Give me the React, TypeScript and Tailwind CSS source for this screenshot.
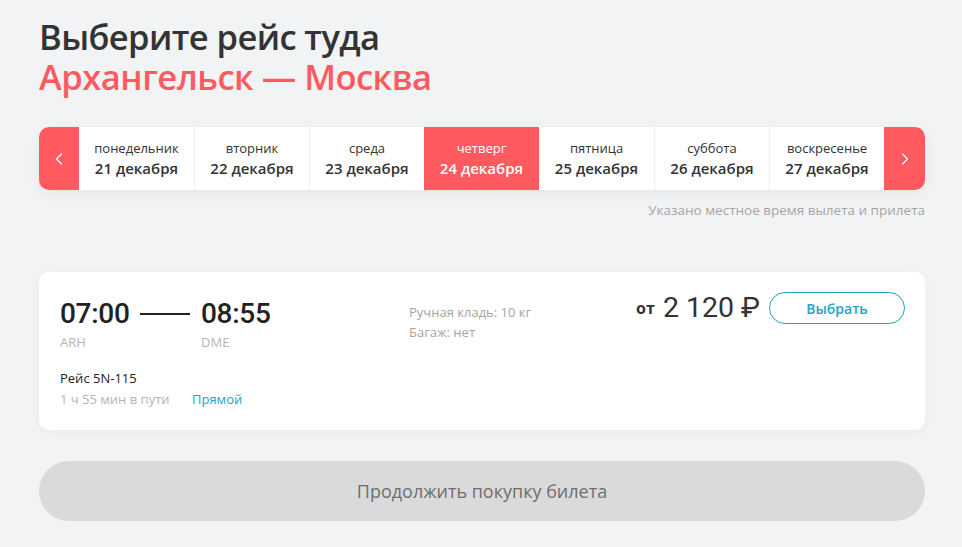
import { ChevronLeft, ChevronRight } from 'lucide-react';

const days = [
  { wd: 'понедельник', date: '21 декабря' },
  { wd: 'вторник', date: '22 декабря' },
  { wd: 'среда', date: '23 декабря' },
  { wd: 'четверг', date: '24 декабря', active: true },
  { wd: 'пятница', date: '25 декабря' },
  { wd: 'суббота', date: '26 декабря' },
  { wd: 'воскресенье', date: '27 декабря' },
];

export default function App() {
  return (
    <div
      className="min-h-[547px] w-[962px] bg-[#f2f3f5] pl-[39px] pr-[37px] pt-[17px] text-[#333]"
      style={{ fontFamily: '"Open Sans", "Noto Sans", sans-serif' }}
    >
      {/* Header */}
      <h1 className="text-[34.5px] font-semibold leading-[40px] tracking-[-0.6px] text-[#333]">
        Выберите рейс туда
      </h1>
      <h2 className="text-[34.5px] font-semibold leading-[40px] tracking-[-0.5px] text-[#ff5a5f]">
        Архангельск — Москва
      </h2>

      {/* Date strip */}
      <div className="mt-[30px] flex h-[63px] overflow-hidden rounded-[10px] bg-white shadow-[0_4px_14px_rgba(0,0,0,0.06)]">
        <button className="flex w-[40px] items-center justify-center bg-[#ff5a5f] text-white">
          <ChevronLeft size={20} strokeWidth={1.5} />
        </button>
        {days.map((d, i) => (
          <div
            key={i}
            className={`flex w-[115px] flex-col items-center justify-center ${
              d.active ? 'bg-[#ff5a5f] text-white' : 'text-[#333]'
            } ${i === 0 || d.active || days[i - 1]?.active ? '' : 'border-l border-[#f0f0f0]'}`}
          >
            <span className="text-[13px] leading-[18px]">{d.wd}</span>
            <span className="text-[15px] font-semibold leading-[22px]">{d.date}</span>
          </div>
        ))}
        <button className="flex flex-1 items-center justify-center bg-[#ff5a5f] text-white">
          <ChevronRight size={20} strokeWidth={1.5} />
        </button>
      </div>
      <div className="mt-[11px] text-right text-[13.5px] leading-[18px] text-[#a5a5a5]">
        Указано местное время вылета и прилета
      </div>

      {/* Flight card */}
      <div className="mt-[53px] flex h-[158px] rounded-[10px] bg-white pl-[21px] pr-[20px] pt-[23px] shadow-[0_2px_10px_rgba(0,0,0,0.04)]">
        <div className="w-[349px]">
          <div className="flex items-start">
            <div className="w-[80px]">
              <div
                className="text-[28px] font-medium leading-[38px] tracking-[-0.3px] text-[#222]"
                style={{ fontFamily: 'Roboto, sans-serif' }}
              >
                07:00
              </div>
              <div className="text-[13px] leading-[18px] text-[#b5b5b5]">ARH</div>
            </div>
            <div className="mr-[11px] mt-[18px] h-[2px] w-[50px] bg-[#222]" />
            <div>
              <div
                className="text-[28px] font-medium leading-[38px] tracking-[-0.3px] text-[#222]"
                style={{ fontFamily: 'Roboto, sans-serif' }}
              >
                08:55
              </div>
              <div className="text-[13px] leading-[18px] text-[#b5b5b5]">DME</div>
            </div>
          </div>
          <div className="mt-[17px] text-[13px] leading-[20px] text-[#222]">Рейс 5N-115</div>
          <div className="mt-[1px] flex text-[13px] leading-[20px]">
            <span className="w-[132px] text-[#b5b5b5]">1 ч 55 мин в пути</span>
            <span className="text-[#1fa4c1]">Прямой</span>
          </div>
        </div>
        <div className="pt-[7px] text-[13px] leading-[20px] text-[#a5a5a5]">
          <div>Ручная кладь: 10 кг</div>
          <div>Багаж: нет</div>
        </div>
        <div className="-mt-[3px] ml-auto flex h-[32px] items-center">
          <span className="mr-[8px] text-[16px] font-bold text-[#333]">от</span>
          <span
            className="text-[28.5px] leading-[32px] text-[#333]"
            style={{ fontFamily: 'Roboto, sans-serif' }}
          >
            2 120 ₽
          </span>
          <button className="ml-[9px] flex h-[32px] w-[136px] items-center justify-center rounded-full border border-[#1fa4c1] text-[14px] font-semibold text-[#1fa4c1]">
            Выбрать
          </button>
        </div>
      </div>

      {/* Continue */}
      <button className="mt-[31px] flex h-[60px] w-full items-center justify-center rounded-full bg-[#dadada] text-[18px] text-[#6e6e6e]">
        Продолжить покупку билета
      </button>
    </div>
  );
}
